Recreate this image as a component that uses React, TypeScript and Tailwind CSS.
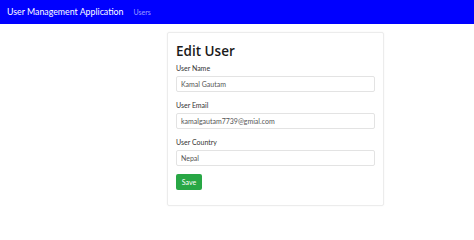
const font = { fontFamily: 'Lato, "Open Sans", sans-serif' };

function Field({ label, value }: { label: string; value: string }) {
  return (
    <div className="mb-[9px]">
      <label className="block text-[7px] leading-[9px] text-[#333] mb-[3px]">{label}</label>
      <div className="h-[16px] border border-[#e3e3e3] rounded-[2px] px-[4px] flex items-center text-[7px] text-[#555]">
        {value}
      </div>
    </div>
  );
}

export default function App() {
  return (
    <div className="w-[474px] h-[227px] bg-white" style={font}>
      <nav className="h-[24px] bg-[#0000ff] flex items-center px-[7px]">
        <span className="text-[8.8px] text-white">User Management Application</span>
        <span className="ml-[10px] text-[7px] text-white/60">Users</span>
      </nav>
      <div className="ml-[167px] mt-[8px] w-[217px] border border-[#ececec] rounded-[2px] shadow-[0_0_2px_rgba(0,0,0,0.05)] px-[8px] pt-[10px] pb-[15px]">
        <h1
          className="text-[13.5px] leading-[17px] font-semibold text-[#1a1a1a] mb-[4px]"
          style={{ fontFamily: '"Open Sans", sans-serif' }}
        >
          Edit User
        </h1>
        <Field label="User Name" value="Kamal Gautam" />
        <Field label="User Email" value="kamalgautam7739@gmial.com" />
        <Field label="User Country" value="Nepal" />
        <button className="h-[16px] w-[26px] -mt-[1px] rounded-[2px] bg-[#28a745] text-white text-[7px] flex items-center justify-center">
          Save
        </button>
      </div>
    </div>
  );
}
